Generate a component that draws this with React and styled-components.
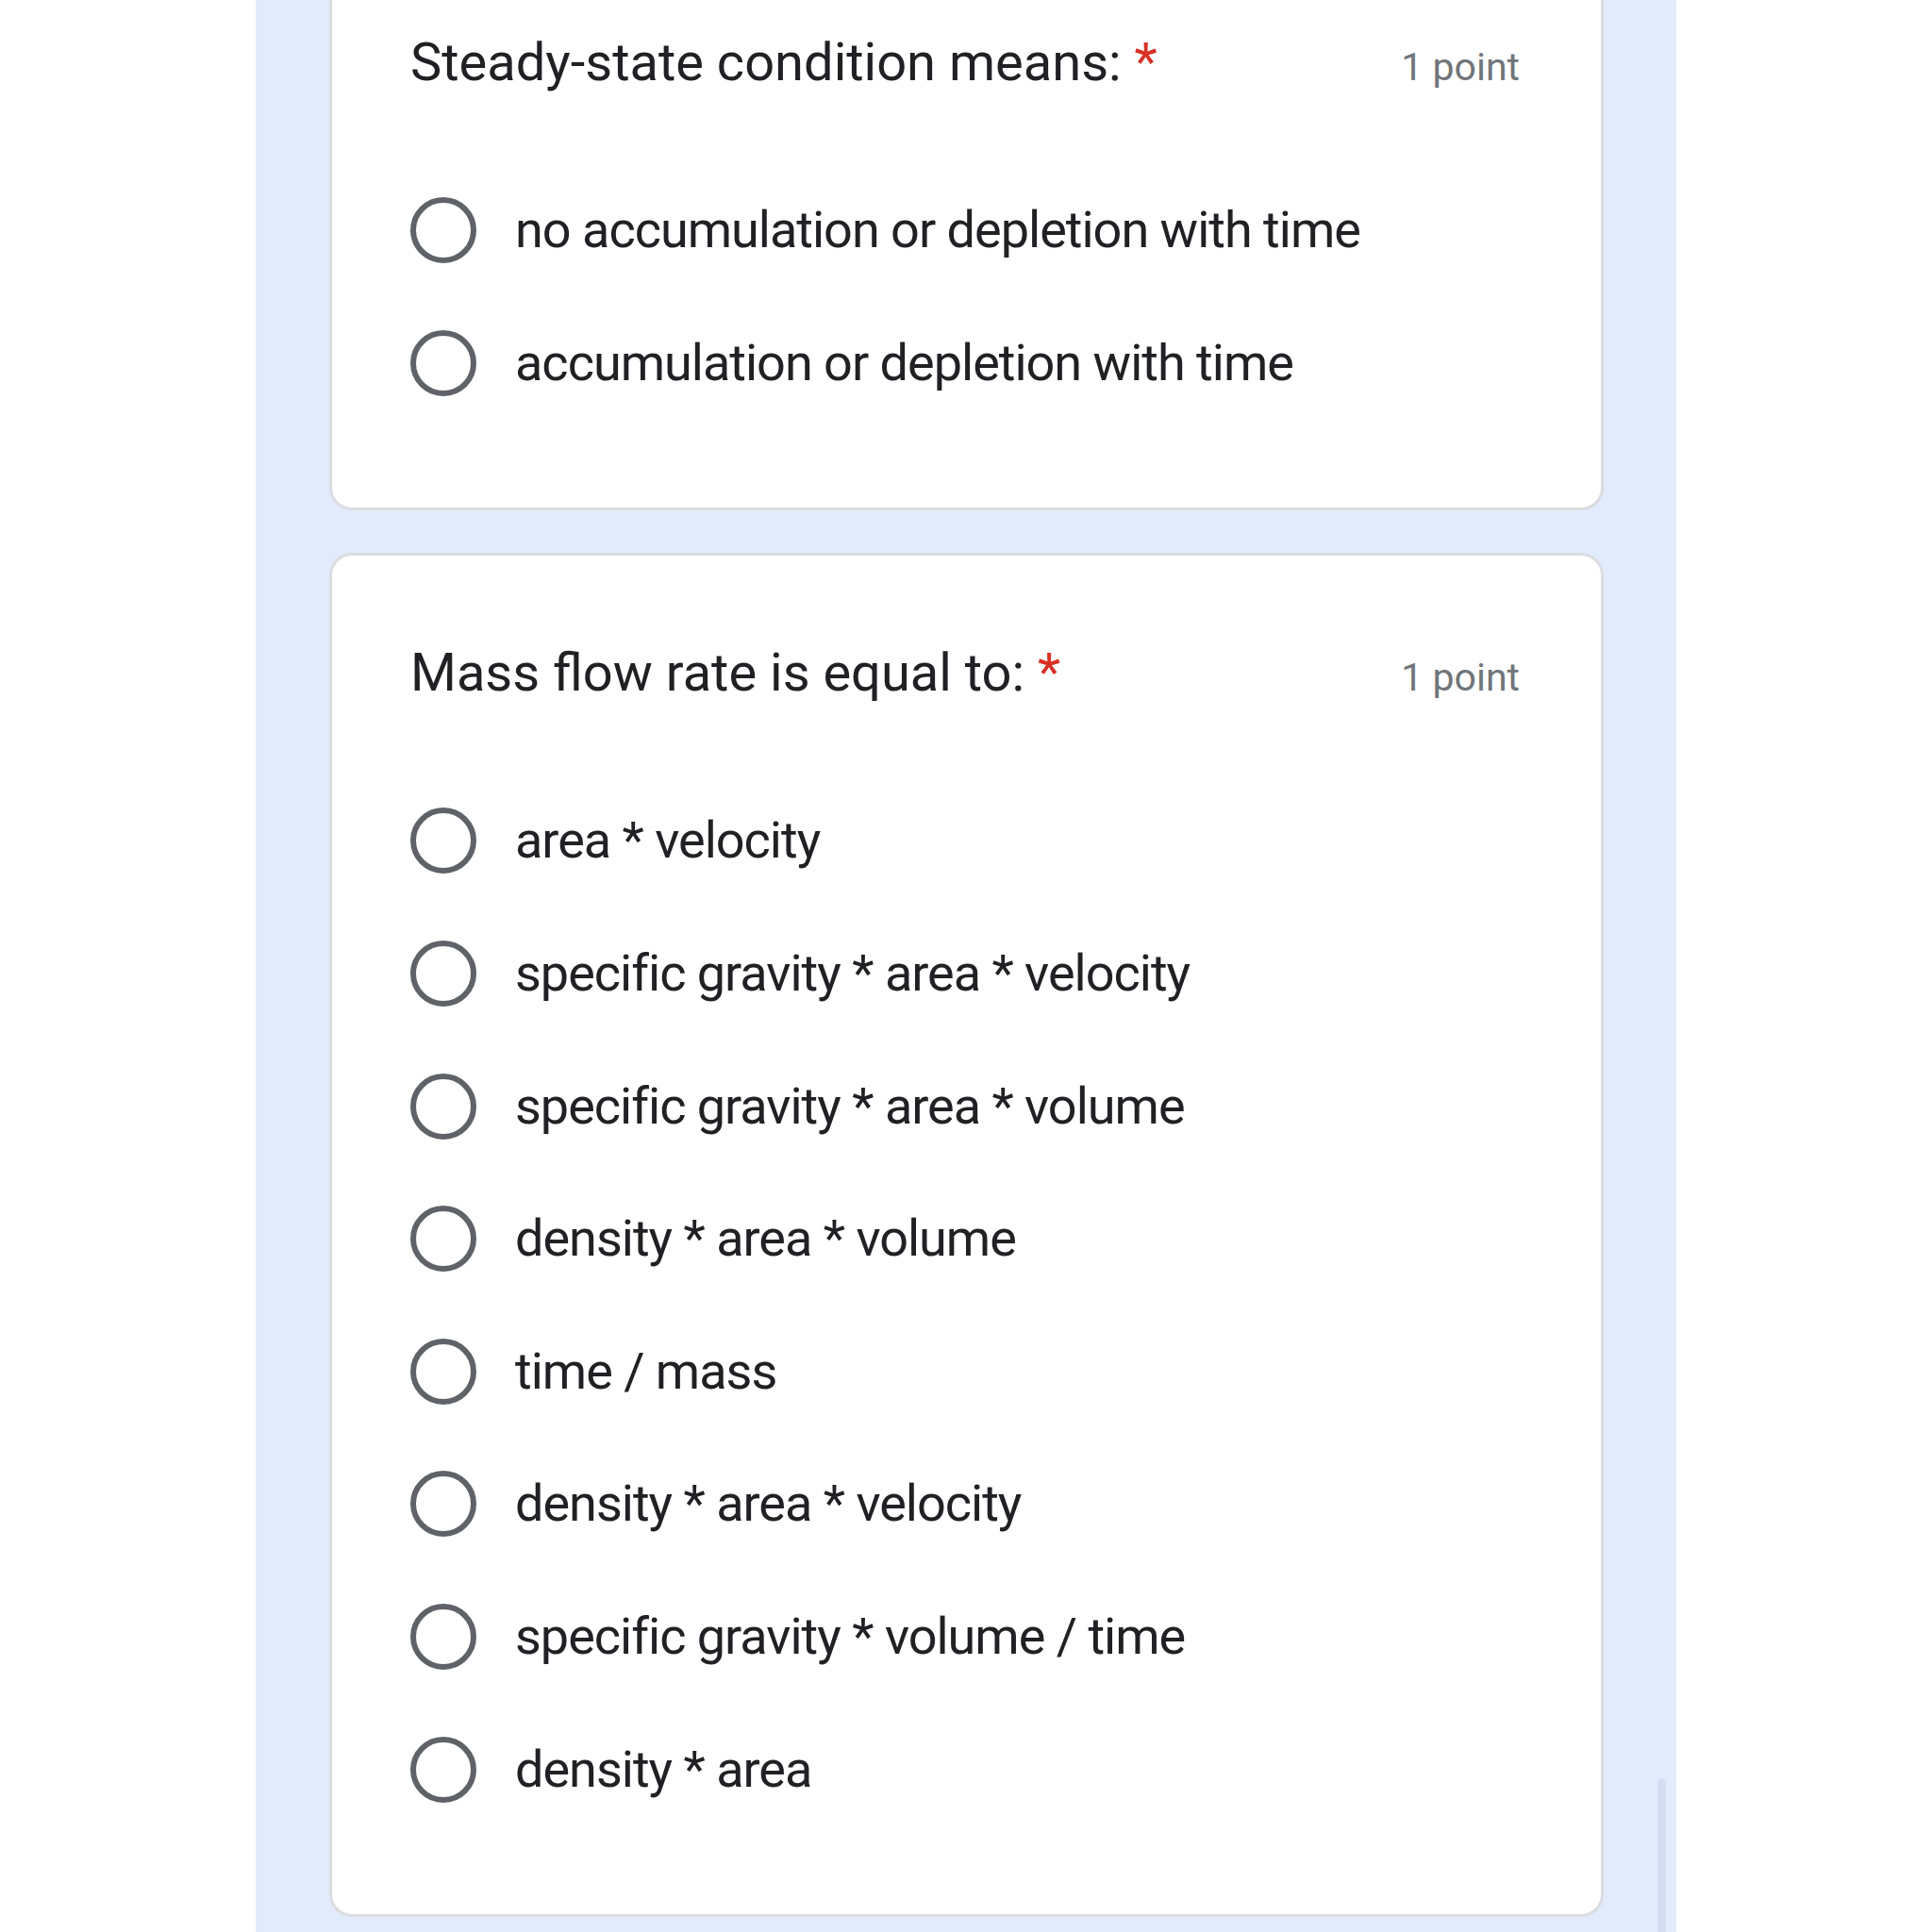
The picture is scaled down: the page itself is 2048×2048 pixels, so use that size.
import styled, { createGlobalStyle } from "styled-components";

const GlobalStyle = createGlobalStyle`
	html,
	body {
		margin: 0;
		padding: 0;
		background: #ffffff;
	}
	body {
		font-family: Roboto, "Noto Sans", "Liberation Sans", sans-serif;
		color: #202124;
		overflow: hidden;
	}
`;

const Page = styled.div`
	height: 2048px;
	overflow: hidden;
	display: flex;
	justify-content: center;
`;

const FormColumn = styled.div`
	position: relative;
	width: 1506px;
	height: 100%;
	background: #e2ebfc;
`;

const CardList = styled.div`
	display: flex;
	flex-direction: column;
	gap: 45px;
	padding: 0 77px 0 78px;
	margin-top: -61px;
`;

const Card = styled.section`
	background: #ffffff;
	border: 3px solid #dadce0;
	border-radius: 24px;
	padding: 89px 86px 83px 83px;
`;

const Header = styled.div`
	display: flex;
	align-items: baseline;
	justify-content: space-between;
	margin-bottom: 68px;
`;

const Title = styled.h2`
	margin: 0;
	font-size: 56px;
	font-weight: 400;
	line-height: 70px;
	color: #202124;
`;

const Required = styled.span`
	color: #d93025;
`;

const Points = styled.span`
	font-size: 41px;
	color: #70757a;
	line-height: 70px;
`;

const Options = styled.div`
	display: flex;
	flex-direction: column;
`;

const Option = styled.label`
	display: flex;
	align-items: center;
	gap: 41px;
	height: 140.6px;
	font-size: 54px;
	letter-spacing: -1px;
	line-height: 70px;
	color: #202124;
	cursor: pointer;
`;

const Radio = styled.span`
	flex: none;
	box-sizing: border-box;
	width: 70px;
	height: 70px;
	border-radius: 50%;
	border: 6.5px solid #5f6368;
`;

const ScrollThumb = styled.div`
	position: absolute;
	right: 11px;
	bottom: 0;
	width: 9px;
	height: 163px;
	border-radius: 5px 5px 0 0;
	background: #d3def3;
`;

const questions = [
	{
		title: "Steady-state condition means:",
		options: ["no accumulation or depletion with time", "accumulation or depletion with time"],
	},
	{
		title: "Mass flow rate is equal to:",
		options: [
			"area * velocity",
			"specific gravity * area * velocity",
			"specific gravity * area * volume",
			"density * area * volume",
			"time / mass",
			"density * area * velocity",
			"specific gravity * volume / time",
			"density * area",
		],
	},
];

const App = () => {
	return (
		<>
			<GlobalStyle />
			<Page>
				<FormColumn>
					<CardList>
						{questions.map((q) => (
							<Card key={q.title}>
								<Header>
									<Title>
										{q.title} <Required>*</Required>
									</Title>
									<Points>1 point</Points>
								</Header>
								<Options>
									{q.options.map((opt) => (
										<Option key={opt}>
											<Radio />
											{opt}
										</Option>
									))}
								</Options>
							</Card>
						))}
					</CardList>
					<ScrollThumb />
				</FormColumn>
			</Page>
		</>
	);
};

export default App;
